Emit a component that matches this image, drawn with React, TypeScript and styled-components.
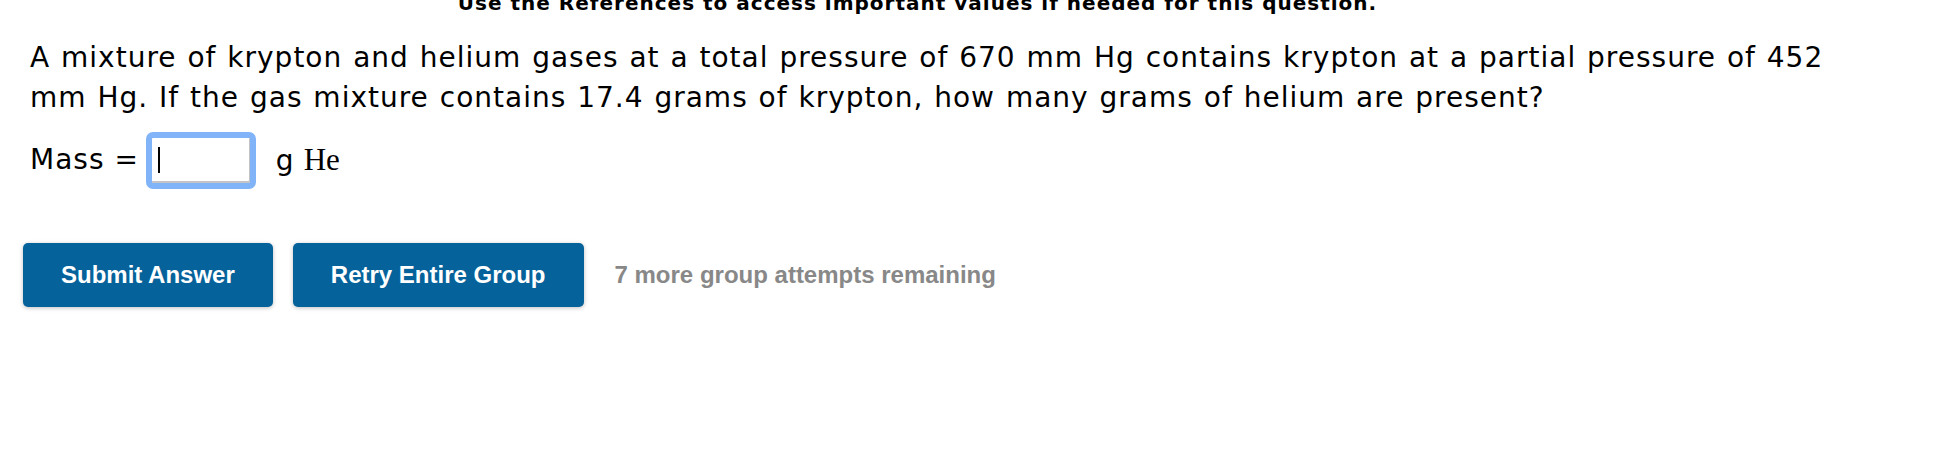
import React from 'react';
import styled, { createGlobalStyle } from 'styled-components';

const GlobalStyle = createGlobalStyle`
    html, body {
        margin: 0;
        padding: 0;
        background: #fff;
    }
    body {
        font-family: "DejaVu Sans", Verdana, sans-serif;
        color: #000;
        overflow: hidden;
    }
`;

const Page = styled.div`
    width: 1943px;
    height: 465px;
    overflow: hidden;
`;

const Content = styled.div`
    padding-left: 30px;
    width: 1830px;
`;

const Notice = styled.div`
    width: 1775px;
    margin-top: -9px;
    font-size: 20px;
    line-height: 24px;
    font-weight: bold;
    letter-spacing: 1px;
    text-align: center;
`;

const Question = styled.p`
    margin: 23px 0 0;
    font-size: 28px;
    line-height: 40px;
    letter-spacing: 1px;
    word-spacing: 1px;
`;

const AnswerRow = styled.div`
    display: flex;
    align-items: center;
    margin-top: 13px;
    height: 58px;
    font-size: 28px;
    letter-spacing: 1px;
`;

const Label = styled.span`
    margin-right: 7px;
    position: relative;
    top: -1px;
`;

const Field = styled.div`
    box-sizing: border-box;
    width: 110px;
    height: 57px;
    border: 6px solid #80b3f8;
    border-radius: 7px;
    background: #fff;
    display: flex;
    align-items: center;
    padding-left: 6px;
    box-shadow: inset -1px -2px 0 #c4c4c4;
`;

const Caret = styled.span`
    width: 2px;
    height: 26px;
    background: #000;
`;

const Unit = styled.span`
    margin-left: 20px;
`;

const Element = styled.span`
    margin-left: 9px;
    font-family: "Liberation Serif", "Times New Roman", serif;
    font-size: 31px;
    letter-spacing: 0;
`;

const Actions = styled.div`
    display: flex;
    align-items: center;
    gap: 20px;
    margin-top: 54px;
    margin-left: -7px;
`;

const ActionButton = styled.button`
    height: 64px;
    padding: 0 38px;
    border: none;
    border-radius: 5px;
    background: #05629a;
    color: #fff;
    font-family: "Liberation Sans", Arial, sans-serif;
    font-weight: bold;
    font-size: 24px;
    box-shadow: 0 1px 4px rgba(0, 0, 0, 0.25);
    cursor: pointer;
`;

const Remaining = styled.span`
    margin-left: 11px;
    font-family: "Liberation Sans", Arial, sans-serif;
    font-weight: bold;
    font-size: 24px;
    color: #888;
`;

const App: React.FC = () => {
    return (
        <Page>
            <GlobalStyle />
            <Content>
                <Notice>Use the References to access important values if needed for this question.</Notice>
                <Question>
                    A mixture of krypton and helium gases at a total pressure of 670 mm Hg contains krypton at a partial pressure of 452 mm Hg. If the gas mixture contains 17.4 grams of krypton, how many grams of helium are present?
                </Question>
                <AnswerRow>
                    <Label>Mass =</Label>
                    <Field>
                        <Caret />
                    </Field>
                    <Unit>g</Unit>
                    <Element>He</Element>
                </AnswerRow>
                <Actions>
                    <ActionButton>Submit Answer</ActionButton>
                    <ActionButton>Retry Entire Group</ActionButton>
                    <Remaining>7 more group attempts remaining</Remaining>
                </Actions>
            </Content>
        </Page>
    );
};

export default App;
